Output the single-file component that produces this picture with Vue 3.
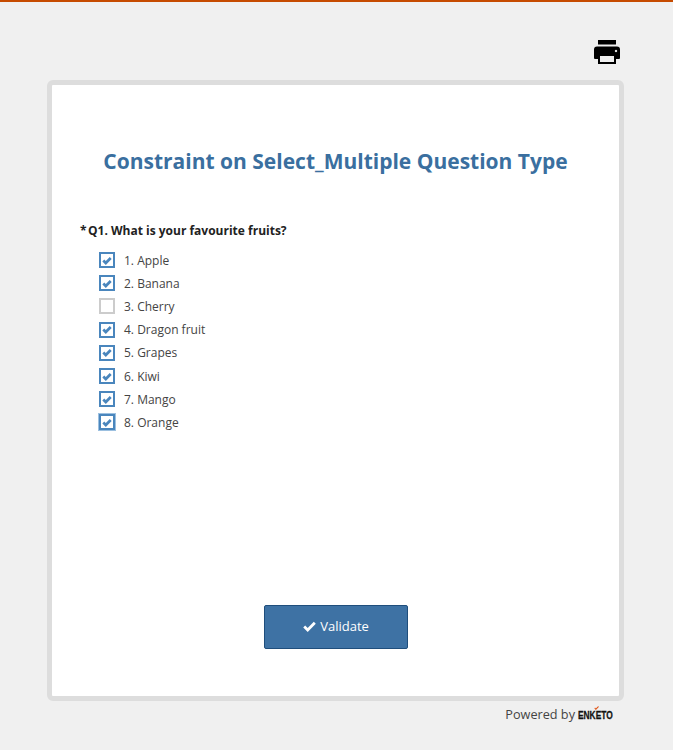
<script setup>
const fruits = [
  { label: '1. Apple', on: true },
  { label: '2. Banana', on: true },
  { label: '3. Cherry', on: false },
  { label: '4. Dragon fruit', on: true },
  { label: '5. Grapes', on: true },
  { label: '6. Kiwi', on: true },
  { label: '7. Mango', on: true },
  { label: '8. Orange', on: true, focus: true },
]
</script>

<template>
  <div class="page">
    <div class="topbar"></div>
    <div class="tools">
      <svg class="print" width="26" height="24" viewBox="0 0 26 24" aria-label="Print">
        <rect x="4" y="0" width="18" height="4.500" fill="#000" />
        <path fill-rule="evenodd" fill="#000" d="M3 6.500h20a3 3 0 0 1 3 3V18a1 1 0 0 1-1 1h-3v5H4v-5H1a1 1 0 0 1-1-1V9.500a3 3 0 0 1 3-3zM22 9.800a1.200 1.200 0 1 0 .01 0z" />
        <rect x="6" y="16" width="14" height="6" fill="#efefef" />
      </svg>
    </div>
    <main class="card">
      <h1 class="title">Constraint on Select_Multiple Question Type</h1>
      <div class="question"><span class="req">*</span>Q1. What is your favourite fruits?</div>
      <ul class="options">
        <li v-for="f in fruits" :key="f.label" class="option">
          <span class="box" :class="{ on: f.on, focus: f.focus }">
            <svg v-if="f.on" width="10" height="9" viewBox="0 0 10 9">
              <path d="M1.300 4.500 3.800 7 8.700 2" fill="none" stroke="#4a86bd" stroke-width="2.700" />
            </svg>
          </span>
          <span class="lbl">{{ f.label }}</span>
        </li>
      </ul>
      <div class="spacer"></div>
      <button class="validate" type="button">
        <svg width="13" height="11" viewBox="0 0 13 11">
          <path d="M1.200 5.600 4.700 9 11.800 1.800" fill="none" stroke="#fff" stroke-width="2.800" />
        </svg>
        Validate
      </button>
    </main>
    <footer class="foot">
      <span class="powered">Powered by</span>
      <span class="logo">ENKETO<svg class="tick" width="7" height="4" viewBox="0 0 7 4"><path d="M1 2 2.500 3.300 6 .6" fill="none" stroke="#e0561a" stroke-width="1.200" /></svg></span>
    </footer>
  </div>
</template>

<style>
html, body { margin: 0; background: #f0f0f0; }
</style>

<style scoped>
.page {
  height: 750px;
  background: #f0f0f0;
  font-family: "Open Sans", sans-serif;
  color: #333;
  overflow: hidden;
}
.topbar { height: 2px; background: #c64b00; }
.tools {
  display: flex;
  justify-content: flex-end;
  padding: 38px 53px 0 0;
  height: 40px;
}
.print { display: block; width: 26px; height: 24px; }
.card {
  box-sizing: border-box;
  width: 577px;
  height: 621px;
  margin-left: 47px;
  border: 5px solid #ddd;
  border-radius: 6px;
  background: #fff;
  display: flex;
  flex-direction: column;
}
.title {
  margin: 61px 0 0;
  text-align: center;
  font-size: 21px;
  line-height: 30px;
  font-weight: 700;
  color: #3a6f9f;
}
.question {
  margin: 45px 0 0 28px;
  font-size: 12px;
  line-height: 20px;
  font-weight: 700;
  color: #222;
}
.req { display: inline-block; width: 8px; font-weight: 700; }
.options {
  list-style: none;
  margin: 7.500px 0 0 47px;
  padding: 0;
}
.option {
  display: flex;
  align-items: center;
  height: 23.200px;
  font-size: 12px;
  color: #444;
}
.box {
  box-sizing: border-box;
  width: 16px;
  height: 16px;
  border: 2px solid #ccc;
  display: flex;
  align-items: center;
  justify-content: center;
  margin-right: 9px;
  background: #fff;
}
.box.on { border-color: #4a86bd; }
.box.focus { box-shadow: 0 0 0 1px #9cc0e0; }
.spacer { flex: 1; }
.validate {
  box-sizing: border-box;
  align-self: center;
  width: 144px;
  height: 44px;
  margin-bottom: 47px;
  padding: 0 0 2px 1px;
  background: #3e72a4;
  border: 1px solid #1f4e7c;
  border-radius: 2px;
  color: #fff;
  font: 400 13px "Open Sans", sans-serif;
  display: flex;
  align-items: center;
  justify-content: center;
  gap: 4px;
}
.foot {
  display: flex;
  justify-content: flex-end;
  align-items: center;
  gap: 3px;
  width: 613px;
  margin-top: 4px;
  height: 17px;
  font-size: 12.700px;
  color: #444;
}
.logo {
  position: relative;
  top: 1px;
  width: 35px;
  font: 700 11px "Liberation Sans", sans-serif;
  color: #111;
  white-space: nowrap;
  -webkit-text-stroke: .3px #111;
  transform: scaleX(.76);
  transform-origin: left center;
}
.tick { position: absolute; left: 21px; top: -3px; }
</style>
